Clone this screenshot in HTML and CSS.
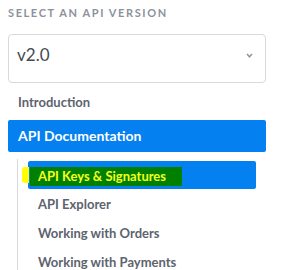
FILE: index.html
```html
<!DOCTYPE html>
<html lang="en">
<head>
  <meta charset="UTF-8">
  <title>API Docs</title>
  <link rel="stylesheet" href="styles.css">
</head>
<body>

<aside class="sidebar">
  <div class="version-label">SELECT AN API VERSION</div>

  <div class="version-select">
    <span>v2.0</span>
    <svg class="chevron" width="7" height="5" viewBox="0 0 7 5">
      <path d="M1 1 L3.5 3.8 L6 1" fill="none" stroke="#8f959e" stroke-width="1.5"/>
    </svg>
  </div>

  <ul class="nav">
    <li class="nav-item">Introduction</li>
    <li class="nav-item active">API Documentation</li>
  </ul>

  <ul class="sub-nav">
    <li class="sub-item current">
      <span class="marker-tip"></span>
      <span class="marker">API Keys &amp; Signatures</span>
    </li>
    <li class="sub-item">API Explorer</li>
    <li class="sub-item">Working with Orders</li>
    <li class="sub-item">Working with Payments</li>
  </ul>
</aside>

</body>
</html>
```

FILE: styles.css
```css
body {
  margin: 0;
  background: #fff;
  font-family: Lato, 'Liberation Sans', sans-serif;
}
.sidebar {
  width: 258px;
  padding: 5px 0 0 8px;
}
.version-label {
  font-size: 11px;
  line-height: 16px;
  letter-spacing: 1.6px;
  color: #8c929b;
  font-weight: bold;
}
.version-select {
  box-sizing: border-box;
  margin-top: 13px;
  height: 49px;
  border: 1px solid #d6d9dd;
  border-radius: 4px;
  display: flex;
  align-items: center;
  justify-content: space-between;
  padding: 0 12px 8px 8px;
  font-size: 17px;
  color: #454a52;
}
.chevron {
  margin-top: 2px;
}
.nav {
  list-style: none;
  margin: 3px 0 0;
  padding: 0;
}
.nav-item {
  height: 32px;
  line-height: 32px;
  padding: 0 10px;
  font-size: 13px;
  font-weight: bold;
  color: #5e636e;
}
.nav-item.active {
  margin-top: 2px;
  background: #0580f0;
  color: #fff;
  border-radius: 2px;
  font-size: 14px;
}
.sub-nav {
  list-style: none;
  margin: 7px 0 0 9px;
  padding: 2px 10px 0 10px;
  border-left: 1px solid #d8dade;
}
.sub-item {
  height: 28px;
  line-height: 28px;
  margin-bottom: 1px;
  padding-left: 10px;
  font-size: 13px;
  font-weight: bold;
  color: #5e636e;
}
.sub-item.current {
  position: relative;
  background: #0580f0;
  border-radius: 2px;
}
.marker {
  display: inline-block;
  line-height: 19px;
  margin-left: -8px;
  padding: 0 16px 0 8px;
  background: #008000;
  color: #f4ff1c;
  vertical-align: middle;
}
.marker-tip {
  position: absolute;
  left: -6px;
  top: 6px;
  width: 7px;
  height: 16px;
  background: #ffff00;
  border-radius: 3px 0 0 3px;
}
```
